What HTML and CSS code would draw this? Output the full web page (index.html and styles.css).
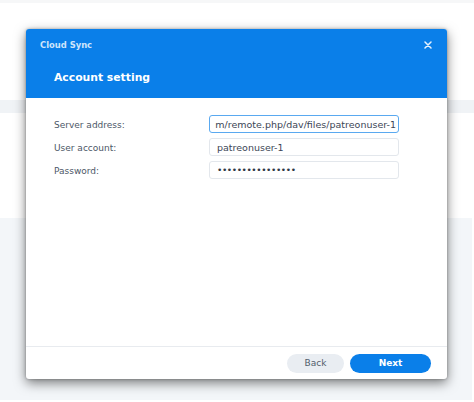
FILE: index.html
```html
<!DOCTYPE html>
<html lang="en">
<head>
<meta charset="utf-8">
<title>Cloud Sync</title>
<link rel="stylesheet" href="styles.css">
</head>
<body>
<div class="page">
  <div class="topline"></div>
  <div class="top-area"></div>
  <div class="band"></div>
  <div class="panel"></div>
  <div class="lower"></div>
</div>

<div class="dialog">
  <div class="dlg-head">
    <div class="dlg-bar">
      <span class="app-name">Cloud Sync</span>
      <svg class="close" width="8" height="8" viewBox="0 0 8 8" aria-hidden="true">
        <path d="M1 1L7 7M7 1L1 7" stroke="currentColor" stroke-width="1.5" stroke-linecap="round"/>
      </svg>
    </div>
    <h1 class="dlg-title">Account setting</h1>
  </div>
  <div class="dlg-body">
    <div class="form">
      <label class="lbl">Server address:</label>
      <div class="field focus"><span class="val">m/remote.php/dav/files/patreonuser-1</span></div>
      <label class="lbl">User account:</label>
      <div class="field"><span class="val">patreonuser-1</span></div>
      <label class="lbl">Password:</label>
      <div class="field"><span class="val dots">••••••••••••••••</span></div>
    </div>
  </div>
  <div class="dlg-foot">
    <button class="btn back">Back</button>
    <button class="btn next">Next</button>
  </div>
</div>
</body>
</html>
```

FILE: styles.css
```css
* { box-sizing: border-box; }

html, body {
  margin: 0;
  padding: 0;
}

body {
  width: 474px;
  height: 402px;
  overflow: hidden;
  font-family: "DejaVu Sans", Verdana, sans-serif;
  background: #ffffff;
  position: relative;
}

/* page behind the modal */
.page {
  display: flex;
  flex-direction: column;
  height: 402px;
}
.topline { height: 3px; background: #f6f7f8; }
.top-area { height: 97px; background: #ffffff; }
.band { height: 13px; background: #f0f3f6; }
.panel { height: 105px; background: #ffffff; }
.lower { height: 182px; background: #f3f6f9; margin: 0 2px 2px 0; }

/* modal window */
.dialog {
  position: absolute;
  left: 26px;
  top: 29px;
  width: 421px;
  height: 350px;
  background: #ffffff;
  border-radius: 3px;
  box-shadow: 0 4px 12px rgba(0, 0, 0, 0.5), 0 0 3px rgba(0, 0, 0, 0.3);
  display: flex;
  flex-direction: column;
  overflow: hidden;
}

.dlg-head {
  height: 69px;
  background: #0a7fe9;
  padding: 0 15px 0 14px;
}
.dlg-bar {
  height: 31px;
  display: flex;
  align-items: center;
  justify-content: space-between;
  padding-top: 1px;
}
.app-name {
  font-size: 8.4px;
  font-weight: bold;
  color: #cfe5fb;
}
.close {
  color: #e6f1fd;
}
.dlg-title {
  margin: 11px 0 0 14px;
  font-size: 10.8px;
  font-weight: bold;
  color: #ffffff;
}

.dlg-body {
  flex: 1;
  padding: 17px 48px 0 28px;
}
.form {
  display: grid;
  grid-template-columns: 155px 190px;
  row-gap: 5px;
  align-items: center;
}
.lbl {
  font-size: 9px;
  color: #4c5767;
  padding-top: 2px;
}
.field {
  height: 18px;
  border: 1px solid #e3e7ec;
  border-radius: 3px;
  display: flex;
  align-items: center;
  padding: 0 7px;
  overflow: hidden;
  white-space: nowrap;
  font-size: 9.5px;
  color: #3c4656;
}
.field.focus {
  border-color: #5aa9f0;
  justify-content: flex-end;
  padding: 0 2px 0 0;
}
.dots {
  font-size: 9px;
  letter-spacing: -0.4px;
  color: #2f3846;
}

.dlg-foot {
  height: 33px;
  border-top: 1px solid #e8ebef;
  display: flex;
  justify-content: flex-end;
  align-items: center;
  gap: 6px;
  padding: 0 16px 0 0;
}
.btn {
  height: 19px;
  border: none;
  border-radius: 10px;
  font-family: inherit;
  font-size: 9px;
  padding: 0;
}
.back {
  width: 57px;
  background: #e9edf2;
  color: #525d6c;
}
.next {
  width: 81px;
  background: #0a7fe9;
  color: #ffffff;
  font-weight: bold;
}
```
